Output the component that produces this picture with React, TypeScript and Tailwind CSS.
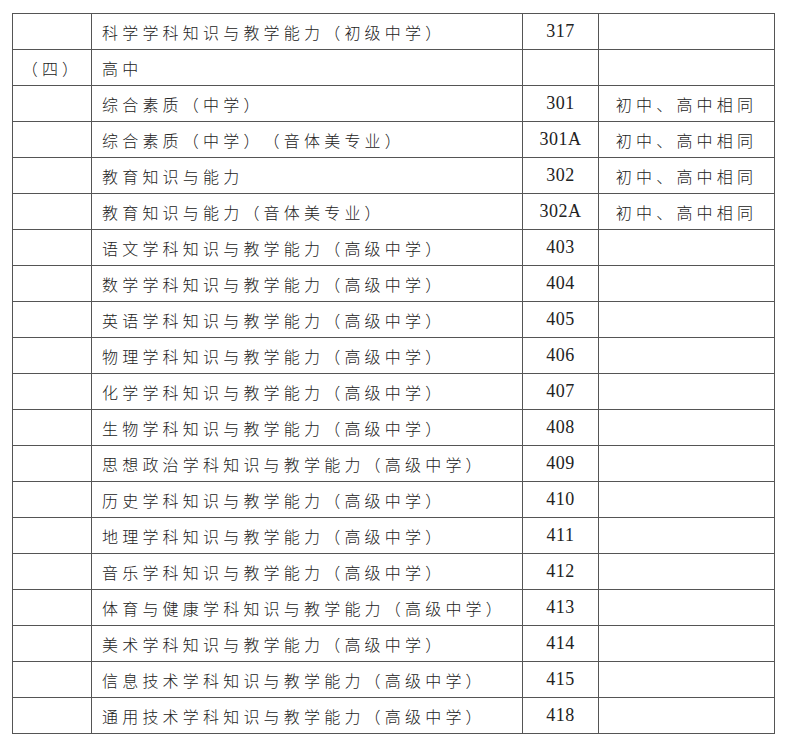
import React from 'react';

type Row = { no?: string; name: string; code?: string; note?: string };

const rows: Row[] = [
  { name: '科学学科知识与教学能力（初级中学）', code: '317' },
  { no: '（四）', name: '高中' },
  { name: '综合素质（中学）', code: '301', note: '初中、高中相同' },
  { name: '综合素质（中学）（音体美专业）', code: '301A', note: '初中、高中相同' },
  { name: '教育知识与能力', code: '302', note: '初中、高中相同' },
  { name: '教育知识与能力（音体美专业）', code: '302A', note: '初中、高中相同' },
  { name: '语文学科知识与教学能力（高级中学）', code: '403' },
  { name: '数学学科知识与教学能力（高级中学）', code: '404' },
  { name: '英语学科知识与教学能力（高级中学）', code: '405' },
  { name: '物理学科知识与教学能力（高级中学）', code: '406' },
  { name: '化学学科知识与教学能力（高级中学）', code: '407' },
  { name: '生物学科知识与教学能力（高级中学）', code: '408' },
  { name: '思想政治学科知识与教学能力（高级中学）', code: '409' },
  { name: '历史学科知识与教学能力（高级中学）', code: '410' },
  { name: '地理学科知识与教学能力（高级中学）', code: '411' },
  { name: '音乐学科知识与教学能力（高级中学）', code: '412' },
  { name: '体育与健康学科知识与教学能力（高级中学）', code: '413' },
  { name: '美术学科知识与教学能力（高级中学）', code: '414' },
  { name: '信息技术学科知识与教学能力（高级中学）', code: '415' },
  { name: '通用技术学科知识与教学能力（高级中学）', code: '418' },
];

const cjk =
  "font-['Noto_Sans_CJK_SC',sans-serif] font-light text-[16px] tracking-[4.2px] [text-spacing-trim:space-all]";
const cell = 'h-[36px] border-[1.5px] border-[#555] p-0 align-middle';

export default function App() {
  return (
    <div className="min-h-[748px] w-[791px] bg-white pl-[12px] pt-[13px] text-[#222]">
      <table className="w-[762px] table-fixed border-collapse">
        <colgroup>
          <col className="w-[79px]" />
          <col className="w-[431px]" />
          <col className="w-[76px]" />
          <col className="w-[176px]" />
        </colgroup>
        <tbody>
          {rows.map((r, i) => (
            <tr key={i}>
              <td className={`${cell} ${cjk} text-center`}>{r.no}</td>
              <td className={`${cell} ${cjk} pl-[10px] whitespace-nowrap`}>{r.name}</td>
              <td className={`${cell} text-center font-['Liberation_Serif',serif] text-[18px] tracking-[0.5px]`}>
                {r.code}
              </td>
              <td className={`${cell} ${cjk} text-center`}>{r.note}</td>
            </tr>
          ))}
        </tbody>
      </table>
    </div>
  );
}
